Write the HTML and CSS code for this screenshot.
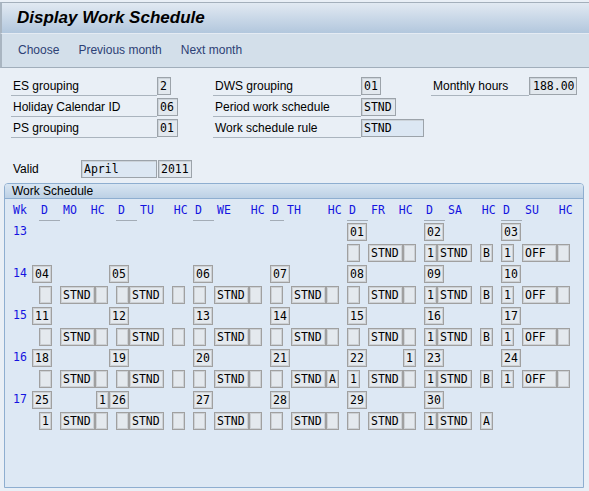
FILE: index.html
```html
<!DOCTYPE html>
<html>
<head>
<meta charset="utf-8">
<title>Display Work Schedule</title>
<link rel="stylesheet" href="styles.css">
</head>
<body>
<div class="titlebar"><h1 class="title">Display Work Schedule</h1></div>
<div class="toolbar"><span>Choose</span><span>Previous month</span><span>Next month</span></div>
<div class="content">
  <div class="fields">
    <div class="lbl">ES grouping</div><div class="cell"><span class="fld w14">2</span></div>
    <div class="lbl">DWS grouping</div><div class="cell"><span class="fld w20">01</span></div>
    <div class="lbl">Monthly hours</div><div class="cell"><span class="fld w48">188.00</span></div>

    <div class="lbl">Holiday Calendar ID</div><div class="cell"><span class="fld w21">06</span></div>
    <div class="lbl">Period work schedule</div><div class="cell"><span class="fld w35">STND</span></div>
    <div class="blank"></div><div class="blank"></div>

    <div class="lbl">PS grouping</div><div class="cell"><span class="fld w21">01</span></div>
    <div class="lbl">Work schedule rule</div><div class="cell"><span class="fld w63 blue">STND</span></div>
    <div class="blank"></div><div class="blank"></div>
  </div>

  <div class="valid-row">
    <span class="valid-lbl">Valid</span>
    <span class="fld w76 blue gap1">April</span>
    <span class="fld w34">2011</span>
  </div>

  <div class="group">
    <div class="group-head">Work Schedule</div>
    <div class="group-body">
      <div class="sched">
        <!-- header -->
        <div class="wk-h">Wk</div>
        <div class="dh"><span class="dh-d">D</span><span class="dh-n">MO</span><span class="dh-hc hc52">HC</span></div>
        <div class="dh"><span class="dh-d">D</span><span class="dh-n">TU</span><span class="dh-hc hc58">HC</span></div>
        <div class="dh"><span class="dh-d">D</span><span class="dh-n">WE</span><span class="dh-hc hc58">HC</span></div>
        <div class="dh"><span class="dh-d narrow">D</span><span class="dh-n">TH</span><span class="dh-hc hcth">HC</span></div>
        <div class="dh"><span class="dh-d">D</span><span class="dh-n">FR</span><span class="dh-hc hc52">HC</span></div>
        <div class="dh"><span class="dh-d">D</span><span class="dh-n">SA</span><span class="dh-hc hc58">HC</span></div>
        <div class="dh"><span class="dh-d">D</span><span class="dh-n">SU</span><span class="dh-hc hc58">HC</span></div>

        <!-- week 13 -->
        <div class="wk">13</div>
        <div class="day"></div>
        <div class="day"></div>
        <div class="day"></div>
        <div class="day"></div>
        <div class="day">
          <div class="ln"><span class="bx dt">01</span></div>
          <div class="ln"><span class="bx s"></span><span class="bx sh a">STND</span><span class="bx s"></span></div>
        </div>
        <div class="day">
          <div class="ln"><span class="bx dt">02</span></div>
          <div class="ln"><span class="bx s">1</span><span class="bx sh">STND</span><span class="bx s g8">B</span></div>
        </div>
        <div class="day">
          <div class="ln"><span class="bx dt">03</span></div>
          <div class="ln"><span class="bx s">1</span><span class="bx sh a">OFF</span><span class="bx s"></span></div>
        </div>

        <!-- week 14 -->
        <div class="wk">14</div>
        <div class="day">
          <div class="ln"><span class="bx dt sft">04</span></div>
          <div class="ln"><span class="bx s"></span><span class="bx sh a">STND</span><span class="bx s"></span></div>
        </div>
        <div class="day">
          <div class="ln"><span class="bx dt sft">05</span></div>
          <div class="ln"><span class="bx s"></span><span class="bx sh">STND</span><span class="bx s g8"></span></div>
        </div>
        <div class="day">
          <div class="ln"><span class="bx dt">06</span></div>
          <div class="ln"><span class="bx s"></span><span class="bx sh a">STND</span><span class="bx s"></span></div>
        </div>
        <div class="day">
          <div class="ln"><span class="bx dt">07</span></div>
          <div class="ln"><span class="bx s"></span><span class="bx sh a">STND</span><span class="bx s"></span></div>
        </div>
        <div class="day">
          <div class="ln"><span class="bx dt">08</span></div>
          <div class="ln"><span class="bx s"></span><span class="bx sh a">STND</span><span class="bx s"></span></div>
        </div>
        <div class="day">
          <div class="ln"><span class="bx dt">09</span></div>
          <div class="ln"><span class="bx s">1</span><span class="bx sh">STND</span><span class="bx s g8">B</span></div>
        </div>
        <div class="day">
          <div class="ln"><span class="bx dt">10</span></div>
          <div class="ln"><span class="bx s">1</span><span class="bx sh a">OFF</span><span class="bx s"></span></div>
        </div>

        <!-- week 15 -->
        <div class="wk">15</div>
        <div class="day">
          <div class="ln"><span class="bx dt sft">11</span></div>
          <div class="ln"><span class="bx s"></span><span class="bx sh a">STND</span><span class="bx s"></span></div>
        </div>
        <div class="day">
          <div class="ln"><span class="bx dt sft">12</span></div>
          <div class="ln"><span class="bx s"></span><span class="bx sh">STND</span><span class="bx s g8"></span></div>
        </div>
        <div class="day">
          <div class="ln"><span class="bx dt">13</span></div>
          <div class="ln"><span class="bx s"></span><span class="bx sh a">STND</span><span class="bx s"></span></div>
        </div>
        <div class="day">
          <div class="ln"><span class="bx dt">14</span></div>
          <div class="ln"><span class="bx s"></span><span class="bx sh a">STND</span><span class="bx s"></span></div>
        </div>
        <div class="day">
          <div class="ln"><span class="bx dt">15</span></div>
          <div class="ln"><span class="bx s"></span><span class="bx sh a">STND</span><span class="bx s"></span></div>
        </div>
        <div class="day">
          <div class="ln"><span class="bx dt">16</span></div>
          <div class="ln"><span class="bx s">1</span><span class="bx sh">STND</span><span class="bx s g8">B</span></div>
        </div>
        <div class="day">
          <div class="ln"><span class="bx dt">17</span></div>
          <div class="ln"><span class="bx s">1</span><span class="bx sh a">OFF</span><span class="bx s"></span></div>
        </div>

        <!-- week 16 -->
        <div class="wk">16</div>
        <div class="day">
          <div class="ln"><span class="bx dt sft">18</span></div>
          <div class="ln"><span class="bx s"></span><span class="bx sh a">STND</span><span class="bx s"></span></div>
        </div>
        <div class="day">
          <div class="ln"><span class="bx dt sft">19</span></div>
          <div class="ln"><span class="bx s"></span><span class="bx sh">STND</span><span class="bx s g8"></span></div>
        </div>
        <div class="day">
          <div class="ln"><span class="bx dt">20</span></div>
          <div class="ln"><span class="bx s"></span><span class="bx sh a">STND</span><span class="bx s"></span></div>
        </div>
        <div class="day">
          <div class="ln"><span class="bx dt">21</span></div>
          <div class="ln"><span class="bx s"></span><span class="bx sh a">STND</span><span class="bx s">A</span></div>
        </div>
        <div class="day">
          <div class="ln"><span class="bx dt">22</span><span class="bx s xb">1</span></div>
          <div class="ln"><span class="bx s">1</span><span class="bx sh a">STND</span><span class="bx s"></span></div>
        </div>
        <div class="day">
          <div class="ln"><span class="bx dt">23</span></div>
          <div class="ln"><span class="bx s">1</span><span class="bx sh">STND</span><span class="bx s g8">B</span></div>
        </div>
        <div class="day">
          <div class="ln"><span class="bx dt">24</span></div>
          <div class="ln"><span class="bx s">1</span><span class="bx sh a">OFF</span><span class="bx s"></span></div>
        </div>

        <!-- week 17 -->
        <div class="wk">17</div>
        <div class="day">
          <div class="ln"><span class="bx dt sft">25</span><span class="bx s xs">1</span></div>
          <div class="ln"><span class="bx s">1</span><span class="bx sh a">STND</span><span class="bx s"></span></div>
        </div>
        <div class="day">
          <div class="ln"><span class="bx dt sft">26</span></div>
          <div class="ln"><span class="bx s"></span><span class="bx sh">STND</span><span class="bx s g8"></span></div>
        </div>
        <div class="day">
          <div class="ln"><span class="bx dt">27</span></div>
          <div class="ln"><span class="bx s"></span><span class="bx sh a">STND</span><span class="bx s"></span></div>
        </div>
        <div class="day">
          <div class="ln"><span class="bx dt">28</span></div>
          <div class="ln"><span class="bx s"></span><span class="bx sh a">STND</span><span class="bx s"></span></div>
        </div>
        <div class="day">
          <div class="ln"><span class="bx dt">29</span></div>
          <div class="ln"><span class="bx s"></span><span class="bx sh a">STND</span><span class="bx s"></span></div>
        </div>
        <div class="day">
          <div class="ln"><span class="bx dt">30</span></div>
          <div class="ln"><span class="bx s">1</span><span class="bx sh">STND</span><span class="bx s g8">A</span></div>
        </div>
        <div class="day"></div>
      </div>
    </div>
  </div>
</div>
</body>
</html>
```
FILE: styles.css
```css
* { box-sizing: border-box; }

body {
  margin: 0;
  width: 589px;
  height: 491px;
  overflow: hidden;
  background: #e9eff6;
  font-family: "Liberation Sans", Arial, sans-serif;
  font-size: 12px;
  color: #000;
}

/* ---------- title bar ---------- */
.titlebar {
  margin-top: 2px;
  height: 32px;
  border-top: 1px solid #a3afbb;
  border-left: 2px solid #a9b5c1;
  border-bottom: 1px solid #e4ebf3;
  background: linear-gradient(#e1e9f2, #b2c7dd);
  padding-left: 15px;
}
.title {
  margin: 0;
  font: italic bold 17px/30px "Liberation Sans", Arial, sans-serif;
  color: #000;
}

/* ---------- toolbar ---------- */
.toolbar {
  height: 34px;
  border-left: 2px solid #a9b5c1;
  border-bottom: 1px solid #a1aebb;
  background: #d3dfea;
  display: flex;
  gap: 19px;
  padding-left: 16px;
  line-height: 33px;
  color: #2d4175;
}

/* ---------- header fields ---------- */
.content { padding-top: 7px; }

.fields {
  display: grid;
  grid-template-columns: 146px 56px 148px 70px 98px 60px;
  margin-left: 11px;
}
.lbl {
  height: 21px;
  border-bottom: 1px solid #aab4be;
  padding: 2px 0 0 2px;
  line-height: 18px;
  white-space: nowrap;
}
.blank { height: 21px; }
.cell { padding-top: 2px; }

.fld {
  display: block;
  height: 18px;
  border: 1px solid #9ca3aa;
  background: #e2e8ee;
  box-shadow: inset 1px 1px 0 #ccd3da;
  font: 11.5px/16px "DejaVu Sans Mono", "Liberation Mono", monospace;
  padding-left: 2px;
  white-space: nowrap;
}
.fld.blue { background: #dce7f3; }
.w14 { width: 14px; }
.w20 { width: 20px; }
.w21 { width: 21px; }
.w34 { width: 34px; }
.w35 { width: 35px; }
.w48 { width: 48px; padding-left: 3px; }
.w63 { width: 63px; }
.w76 { width: 76px; }
.gap1 { margin-right: 1px; }

.valid-row {
  display: flex;
  height: 18px;
  margin: 22px 0 5px 13px;
}
.valid-lbl {
  width: 68px;
  line-height: 19px;
}

/* ---------- group box ---------- */
.group {
  margin-left: 4px;
  width: 580px;
  border: 1px solid #8eaed0;
  border-radius: 4px 4px 0 0;
}
.group-head {
  height: 15px;
  border-bottom: 1px solid #8eaed0;
  border-radius: 3px 3px 0 0;
  background: linear-gradient(#d8e5f2, #bcd0e5);
  padding-left: 7px;
  line-height: 14px;
}
.group-body {
  height: 288px;
  background: #dde8f4;
  padding-top: 1px;
}

/* ---------- schedule grid ---------- */
.sched {
  display: grid;
  grid-template-columns: 34px repeat(7, 77px);
  font: 11.5px "DejaVu Sans Mono", "Liberation Mono", monospace;
}
.wk-h, .wk {
  color: #1414e0;
  padding-left: 8px;
  line-height: 21px;
}
.wk-h { height: 21px; line-height: 21px; }

.dh {
  display: flex;
  height: 21px;
  color: #1414e0;
  line-height: 21px;
  white-space: nowrap;
}
.dh-d {
  width: 21px;
  height: 21px;
  padding-left: 2px;
  border-bottom: 1px solid #a3acb6;
  line-height: 20px;
  flex: none;
}
.dh-d.narrow { width: 14px; }
.dh-n { margin-left: 3px; line-height: 20px; }
.dh-hc { line-height: 20px; }
.hc52 { margin-left: 14px; }
.hc58 { margin-left: 20px; }
.hcth { margin-left: 27px; }

.day { display: flex; flex-direction: column; }
.ln {
  height: 21px;
  display: flex;
  padding-top: 2px;
}
.bx {
  flex: none;
  height: 18px;
  border: 1px solid #a0a0a0;
  background: #e4e9ee;
  box-shadow: inset 1px 1px 0 #cdd1d5, inset -1px -1px 0 #cdd1d5;
  line-height: 16px;
  padding-left: 2px;
  color: #000;
  white-space: nowrap;
  overflow: hidden;
}
.bx.s { width: 13px; }
.bx.dt { width: 20px; }
.bx.dt.sft { margin-left: -7px; }
.bx.sh { width: 35px; }
.bx.sh.a { margin-left: 8px; }
.bx.g8 { margin-left: 8px; }
.bx.xb { margin-left: 36px; }
.bx.xs { margin-left: 44px; }
```
